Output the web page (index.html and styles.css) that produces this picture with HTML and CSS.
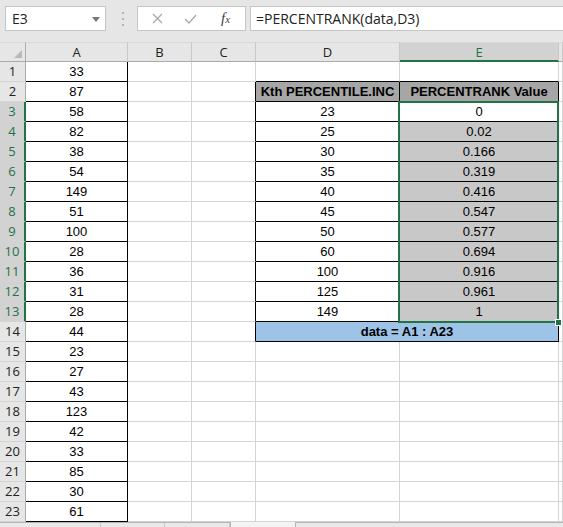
FILE: index.html
```html
<!DOCTYPE html>
<html lang="en">
<head>
    <meta charset="UTF-8">
    <title>PERCENTRANK</title>
    <link rel="stylesheet" href="styles.css">
</head>
<body>
    <div class="toolbar">
        <div class="name-box">
            <span>E3</span>
            <svg class="drop" width="8" height="5" viewBox="0 0 8 5"><path d="M0 0h8L4 5z" fill="#767676"/></svg>
        </div>
        <svg class="dots" width="3" height="14" viewBox="0 0 3 14">
            <rect x="0" y="0" width="2" height="2" fill="#b4b4b4"/>
            <rect x="0" y="6" width="2" height="2" fill="#b4b4b4"/>
            <rect x="0" y="12" width="2" height="2" fill="#b4b4b4"/>
        </svg>
        <div class="fx-box">
            <svg class="ico-x" width="11" height="11" viewBox="0 0 11 11"><path d="M1 1l9 9M10 1l-9 9" stroke="#a8a8a8" stroke-width="1.3" fill="none"/></svg>
            <svg class="ico-ok" width="13" height="10" viewBox="0 0 13 10"><path d="M1 5l4 4L12 1" stroke="#a8a8a8" stroke-width="1.3" fill="none"/></svg>
            <span class="fx"><i>f</i><i class="sub">x</i></span>
        </div>
        <div class="formula">=PERCENTRANK(data,D3)</div>
    </div>

    <div class="sheet">
        <div class="row hdr">
            <div class="corner"><svg width="8" height="8" viewBox="0 0 8 8"><path d="M8 0v8H0z" fill="#b9b9b9"/></svg></div>
            <div class="col">A</div>
            <div class="col">B</div>
            <div class="col">C</div>
            <div class="col">D</div>
            <div class="col sel">E</div>
            <div class="col"></div>
        </div>
        <div class="row"><div class="rh">1</div><div class="c a">33</div><div class="c"></div><div class="c"></div><div class="c top"></div><div class="c top"></div><div class="c"></div></div>
        <div class="row"><div class="rh">2</div><div class="c a">87</div><div class="c"></div><div class="c cl"></div><div class="c tb th">Kth PERCENTILE.INC</div><div class="c tb th">PERCENTRANK Value</div><div class="c"></div></div>
        <div class="row"><div class="rh sel">3</div><div class="c a">58</div><div class="c"></div><div class="c cl"></div><div class="c tb">23</div><div class="c tb">0</div><div class="c"></div></div>
        <div class="row"><div class="rh sel">4</div><div class="c a">82</div><div class="c"></div><div class="c cl"></div><div class="c tb">25</div><div class="c tb sh">0.02</div><div class="c"></div></div>
        <div class="row"><div class="rh sel">5</div><div class="c a">38</div><div class="c"></div><div class="c cl"></div><div class="c tb">30</div><div class="c tb sh">0.166</div><div class="c"></div></div>
        <div class="row"><div class="rh sel">6</div><div class="c a">54</div><div class="c"></div><div class="c cl"></div><div class="c tb">35</div><div class="c tb sh">0.319</div><div class="c"></div></div>
        <div class="row"><div class="rh sel">7</div><div class="c a">149</div><div class="c"></div><div class="c cl"></div><div class="c tb">40</div><div class="c tb sh">0.416</div><div class="c"></div></div>
        <div class="row"><div class="rh sel">8</div><div class="c a">51</div><div class="c"></div><div class="c cl"></div><div class="c tb">45</div><div class="c tb sh">0.547</div><div class="c"></div></div>
        <div class="row"><div class="rh sel">9</div><div class="c a">100</div><div class="c"></div><div class="c cl"></div><div class="c tb">50</div><div class="c tb sh">0.577</div><div class="c"></div></div>
        <div class="row"><div class="rh sel">10</div><div class="c a">28</div><div class="c"></div><div class="c cl"></div><div class="c tb">60</div><div class="c tb sh">0.694</div><div class="c"></div></div>
        <div class="row"><div class="rh sel">11</div><div class="c a">36</div><div class="c"></div><div class="c cl"></div><div class="c tb">100</div><div class="c tb sh">0.916</div><div class="c"></div></div>
        <div class="row"><div class="rh sel">12</div><div class="c a">31</div><div class="c"></div><div class="c cl"></div><div class="c tb">125</div><div class="c tb sh">0.961</div><div class="c"></div></div>
        <div class="row"><div class="rh sel">13</div><div class="c a">28</div><div class="c"></div><div class="c cl"></div><div class="c tb">149</div><div class="c tb sh">1</div><div class="c"></div></div>
        <div class="row"><div class="rh">14</div><div class="c a">44</div><div class="c"></div><div class="c cl"></div><div class="c tb blue">data = A1 : A23</div><div class="c"></div></div>
        <div class="row"><div class="rh">15</div><div class="c a">23</div><div class="c"></div><div class="c"></div><div class="c"></div><div class="c"></div><div class="c"></div></div>
        <div class="row"><div class="rh">16</div><div class="c a">27</div><div class="c"></div><div class="c"></div><div class="c"></div><div class="c"></div><div class="c"></div></div>
        <div class="row"><div class="rh">17</div><div class="c a">43</div><div class="c"></div><div class="c"></div><div class="c"></div><div class="c"></div><div class="c"></div></div>
        <div class="row"><div class="rh">18</div><div class="c a">123</div><div class="c"></div><div class="c"></div><div class="c"></div><div class="c"></div><div class="c"></div></div>
        <div class="row"><div class="rh">19</div><div class="c a">42</div><div class="c"></div><div class="c"></div><div class="c"></div><div class="c"></div><div class="c"></div></div>
        <div class="row"><div class="rh">20</div><div class="c a">33</div><div class="c"></div><div class="c"></div><div class="c"></div><div class="c"></div><div class="c"></div></div>
        <div class="row"><div class="rh">21</div><div class="c a">85</div><div class="c"></div><div class="c"></div><div class="c"></div><div class="c"></div><div class="c"></div></div>
        <div class="row"><div class="rh">22</div><div class="c a">30</div><div class="c"></div><div class="c"></div><div class="c"></div><div class="c"></div><div class="c"></div></div>
        <div class="row"><div class="rh">23</div><div class="c a">61</div><div class="c"></div><div class="c"></div><div class="c"></div><div class="c"></div><div class="c"></div></div>

        <div class="selection"><span class="handle"></span></div>
    </div>

    <div class="tabbar">
        <div class="tabs"><span class="tab"></span><span class="tab"></span><span class="tab"></span></div>
        <div class="gap"></div>
        <div class="hscroll"></div>
    </div>
</body>
</html>
```

FILE: styles.css
```css
* {
    box-sizing: border-box;
}
body {
    margin: 0;
    padding: 0;
    width: 563px;
    height: 527px;
    overflow: hidden;
    background-color: #ffffff;
    font-family: "Liberation Sans", Arial, sans-serif;
}

/* formula bar */
.toolbar {
    display: flex;
    align-items: flex-start;
    height: 42px;
    padding: 6px 0 0 5px;
    background-color: #e6e6e6;
    font-family: "Open Sans", "Noto Sans", sans-serif;
    font-size: 14px;
    color: #222;
}
.name-box {
    display: flex;
    align-items: center;
    justify-content: space-between;
    width: 101px;
    height: 25px;
    padding: 0 5px 0 6px;
    background-color: #fff;
    border: 1px solid #c6c6c6;
}
.drop {
    margin-top: 1px;
}
.dots {
    margin: 6px 0 0 16px;
}
.fx-box {
    display: flex;
    align-items: center;
    width: 109px;
    height: 25px;
    margin-left: 12px;
    background-color: #fff;
    border: 1px solid #c6c6c6;
}
.ico-x {
    margin-left: 14px;
}
.ico-ok {
    margin-left: 21px;
}
.fx {
    margin-left: 24px;
    font-family: "Liberation Serif", "Times New Roman", serif;
    font-size: 15px;
    color: #444;
}
.fx .sub {
    font-size: 11px;
}
.formula {
    flex: 1;
    min-width: 0;
    height: 25px;
    margin-left: 4px;
    padding-left: 5px;
    line-height: 23px;
    background-color: #fff;
    border: 1px solid #c6c6c6;
    border-right: none;
    white-space: nowrap;
}

/* grid */
.sheet {
    position: relative;
}
.row {
    display: grid;
    grid-template-columns: 26px 102px 64px 64px 144px 159px minmax(0, 1fr);
    height: 20px;
}
.row > div {
    height: 20px;
    min-width: 0;
}
.c {
    border-right: 1px solid #d4d4d4;
    border-bottom: 1px solid #d4d4d4;
    text-align: center;
    font-size: 13px;
    line-height: 20px;
    color: #000;
    white-space: nowrap;
    overflow: hidden;
}
.hdr > div {
    background-color: #e6e6e6;
    border-top: 1px solid #d9d9d9;
    border-right: 1px solid #c8c8c8;
    border-bottom: 1px solid #ababab;
    text-align: center;
    font-family: "Open Sans", "Noto Sans", sans-serif;
    font-size: 13px;
    line-height: 18px;
    color: #222;
}
.hdr .corner {
    display: flex;
    align-items: flex-end;
    justify-content: flex-end;
    padding: 0 3px 3px 0;
    border-right-color: #ababab;
}
.hdr .sel {
    background-color: #d2d2d2;
    border-bottom: 2px solid #217346;
    color: #217346;
}
.rh {
    background-color: #e6e6e6;
    border-right: 1px solid #ababab;
    border-bottom: 1px solid #d4d4d4;
    text-align: center;
    font-family: "Open Sans", "Noto Sans", sans-serif;
    font-size: 13px;
    line-height: 19px;
    color: #222;
}
.rh.sel {
    background-color: #d2d2d2;
    border-right: 2px solid #217346;
    color: #217346;
}
.a {
    border-right-color: #000;
    border-bottom-color: #000;
}
.cl {
    border-right-color: #000;
}
.top {
    border-bottom-color: #000;
}
.tb {
    border-right-color: #000;
    border-bottom-color: #000;
}
.th {
    background-color: #a6a6a6;
    font-weight: bold;
}
.sh {
    background-color: #c8c8c8;
}
.blue {
    grid-column: span 2;
    background-color: #9dc3e6;
    font-weight: bold;
}

/* active selection E3:E13 */
.selection {
    position: absolute;
    left: 398px;
    top: 59px;
    width: 161px;
    height: 222px;
    border: 2px solid #217346;
}
.handle {
    position: absolute;
    right: -5px;
    bottom: -5px;
    width: 7px;
    height: 7px;
    background-color: #217346;
    border: 1px solid #fff;
}

/* sheet tabs strip */
.tabbar {
    display: flex;
    height: 6px;
}
.tabs {
    display: flex;
    width: 231px;
    background-color: #e9e9e9;
    border-top: 1px solid #b5b5b5;
    border-right: 1px solid #b5b5b5;
}
.tab {
    width: 65px;
    border-right: 1px solid #c6c6c6;
}
.tab:first-child {
    width: 101px;
}
.gap {
    width: 64px;
    background-color: #f3f3f3;
}
.hscroll {
    flex: 1;
    min-width: 0;
    background-color: #e9e9e9;
    border-top: 1px solid #b5b5b5;
    border-left: 1px solid #b5b5b5;
}
```
